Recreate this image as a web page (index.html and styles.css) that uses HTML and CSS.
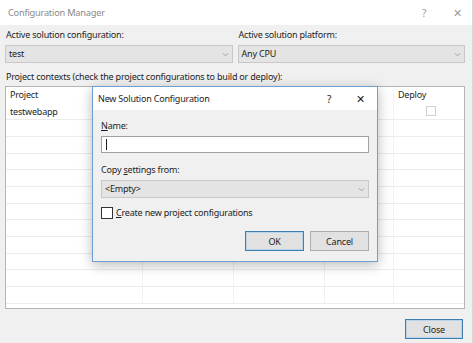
FILE: index.html
```html
<!DOCTYPE html>
<html lang="en">
<head>
  <meta charset="UTF-8">
  <title>Configuration Manager</title>
  <link rel="stylesheet" href="styles.css">
</head>
<body>
  <div class="window">
    <div class="titlebar">
      <span class="title">Configuration Manager</span>
      <span class="tb-help">?</span>
      <span class="tb-close">&#x2715;</span>
    </div>

    <div class="content">
      <div class="selectors">
        <div class="field">
          <label>Active solution configuration:</label>
          <div class="combo"><span>test</span><svg class="chev" viewBox="0 0 8 5"><path d="M1 1l3 3 3-3"/></svg></div>
        </div>
        <div class="field">
          <label>Active solution platform:</label>
          <div class="combo"><span>Any CPU</span><svg class="chev" viewBox="0 0 8 5"><path d="M1 1l3 3 3-3"/></svg></div>
        </div>
      </div>

      <div class="contexts-label">Project contexts (check the project configurations to build or deploy):</div>

      <div class="grid">
        <div class="row head">
          <div class="cell">Project</div>
          <div class="cell"></div>
          <div class="cell"></div>
          <div class="cell"></div>
          <div class="cell">Deploy</div>
        </div>
        <div class="row">
          <div class="cell">testwebapp</div>
          <div class="cell"></div>
          <div class="cell"></div>
          <div class="cell"></div>
          <div class="cell center"><span class="box disabled"></span></div>
        </div>
        <div class="row"><div class="cell"></div><div class="cell"></div><div class="cell"></div><div class="cell"></div><div class="cell"></div></div>
        <div class="row"><div class="cell"></div><div class="cell"></div><div class="cell"></div><div class="cell"></div><div class="cell"></div></div>
        <div class="row"><div class="cell"></div><div class="cell"></div><div class="cell"></div><div class="cell"></div><div class="cell"></div></div>
        <div class="row"><div class="cell"></div><div class="cell"></div><div class="cell"></div><div class="cell"></div><div class="cell"></div></div>
        <div class="row"><div class="cell"></div><div class="cell"></div><div class="cell"></div><div class="cell"></div><div class="cell"></div></div>
        <div class="row"><div class="cell"></div><div class="cell"></div><div class="cell"></div><div class="cell"></div><div class="cell"></div></div>
        <div class="row"><div class="cell"></div><div class="cell"></div><div class="cell"></div><div class="cell"></div><div class="cell"></div></div>
        <div class="row"><div class="cell"></div><div class="cell"></div><div class="cell"></div><div class="cell"></div><div class="cell"></div></div>
        <div class="row"><div class="cell"></div><div class="cell"></div><div class="cell"></div><div class="cell"></div><div class="cell"></div></div>
        <div class="row"><div class="cell"></div><div class="cell"></div><div class="cell"></div><div class="cell"></div><div class="cell"></div></div>
        <div class="row"><div class="cell"></div><div class="cell"></div><div class="cell"></div><div class="cell"></div><div class="cell"></div></div>
      </div>

      <div class="footer">
        <button class="btn default">Close</button>
      </div>
    </div>

    <!-- modal on top of the manager -->
    <div class="dialog">
      <div class="dlg-titlebar">
        <span class="title dark">New Solution Configuration</span>
        <span class="tb-help dark">?</span>
        <span class="tb-close dark">&#x2715;</span>
      </div>
      <div class="dlg-body">
        <label><u>N</u>ame:</label>
        <div class="textbox"><span class="caret"></span></div>
        <label class="gap">Copy <u>s</u>ettings from:</label>
        <div class="combo"><span>&lt;Empty&gt;</span><svg class="chev" viewBox="0 0 8 5"><path d="M1 1l3 3 3-3"/></svg></div>
        <div class="check-line">
          <span class="box"></span>
          <span><u>C</u>reate new project configurations</span>
        </div>
        <div class="dlg-buttons">
          <button class="btn default">OK</button>
          <button class="btn">Cancel</button>
        </div>
      </div>
    </div>
  </div>
</body>
</html>
```

FILE: styles.css
```css
html, body {
  margin: 0;
  padding: 0;
}
body {
  font-family: "Noto Sans", "Open Sans", sans-serif;
  font-size: 9px;
  letter-spacing: -0.2px;
  color: #1e1e1e;
  background: #fff;
}
.window {
  position: relative;
  width: 472px;
  height: 343px;
  display: flex;
  flex-direction: column;
  border-right: 2px solid #d6d6d6;
}
.titlebar {
  height: 25px;
  display: flex;
  align-items: center;
  padding: 0 0 0 8px;
  background: #fff;
}
.title {
  flex: 1;
  color: #8a8a8a;
  font-size: 9.2px;
}
.title.dark {
  color: #1e1e1e;
}
.tb-help {
  color: #999;
  font-size: 10px;
  width: 36px;
  text-align: center;
}
.tb-close {
  color: #999;
  font-size: 11px;
  width: 30px;
  text-align: center;
}
.tb-help.dark,
.tb-close.dark {
  color: #1e1e1e;
}
.content {
  flex: 1;
  background: #f0f0f0;
  padding: 3px 7px 0 5px;
  display: flex;
  flex-direction: column;
}
.selectors {
  display: flex;
  gap: 5px;
}
.field {
  flex: 1;
  display: flex;
  flex-direction: column;
}
.field label {
  padding: 0 0 3px 1px;
  line-height: 14px;
}
.combo {
  height: 16px;
  border: 1px solid #c8c8c8;
  background: #e4e4e4;
  display: flex;
  align-items: center;
  justify-content: space-between;
  padding: 0 3px 0 3px;
  line-height: 16px;
}
.chev {
  width: 7px;
  height: 5px;
  fill: none;
  stroke: #9a9a9a;
  stroke-width: 1;
}
.contexts-label {
  margin-top: 7px;
  padding-left: 1px;
  line-height: 14px;
}
.grid {
  margin-top: 2px;
  height: 221px;
  border: 1px solid #b4b4b4;
  background: #fff;
  overflow: hidden;
}
.row {
  display: grid;
  grid-template-columns: 137px 91px 91px 69px 1fr;
  height: 16.67px;
  border-bottom: 1px solid #ececec;
  box-sizing: border-box;
}
.row.head {
  border-bottom: none;
}
.cell {
  border-right: 1px solid #f1f1f1;
  padding-left: 4px;
  line-height: 16px;
  white-space: nowrap;
  overflow: hidden;
}
.cell:last-child {
  border-right: none;
}
.cell.center {
  display: flex;
  justify-content: center;
  align-items: center;
}
.box {
  display: inline-block;
  width: 10px;
  height: 10px;
  border: 1px solid #333;
  background: #fff;
  box-sizing: border-box;
}
.box.disabled {
  border-color: #d0d0d0;
}
.footer {
  display: flex;
  justify-content: flex-end;
  padding: 10px 2px 0 0;
}
.btn {
  font-family: inherit;
  font-size: 9px;
  letter-spacing: -0.2px;
  color: #1e1e1e;
  width: 58px;
  height: 20px;
  background: #e1e1e1;
  border: 1px solid #adadad;
  padding: 0;
}
.btn.default {
  border: 1px solid #3c7fb1;
  box-shadow: inset 0 0 0 1px #b8d3ea;
}
.dialog {
  position: absolute;
  left: 92px;
  top: 86px;
  width: 286px;
  height: 176px;
  border: 1px solid #6f9ed2;
  box-sizing: border-box;
  background: #f0f0f0;
  box-shadow: 0 3px 12px rgba(0, 0, 0, 0.28);
  display: flex;
  flex-direction: column;
}
.dlg-titlebar {
  height: 23px;
  background: #fff;
  display: flex;
  align-items: center;
  padding-left: 5px;
}
.dlg-titlebar .title {
  font-size: 9px;
}
.dlg-titlebar .tb-help {
  width: 28px;
}
.dlg-titlebar .tb-close {
  width: 34px;
}
.dlg-body {
  padding: 9px 8px 0 8px;
  display: flex;
  flex-direction: column;
}
.dlg-body label {
  line-height: 14px;
  padding-bottom: 3px;
}
.dlg-body label.gap {
  margin-top: 10px;
}
.textbox {
  height: 17px;
  border: 1px solid #a0a0a0;
  background: #fff;
  box-sizing: border-box;
  display: flex;
  align-items: center;
  padding-left: 4px;
}
.caret {
  width: 1px;
  height: 11px;
  background: #1e1e1e;
}
.check-line {
  display: flex;
  align-items: center;
  gap: 3px;
  margin-top: 8px;
  line-height: 14px;
}
.check-line .box {
  width: 12px;
  height: 12px;
}
.dlg-buttons {
  display: flex;
  justify-content: flex-end;
  gap: 6px;
  margin-top: 11px;
}
.dlg-buttons .btn {
  width: 59px;
}
```
